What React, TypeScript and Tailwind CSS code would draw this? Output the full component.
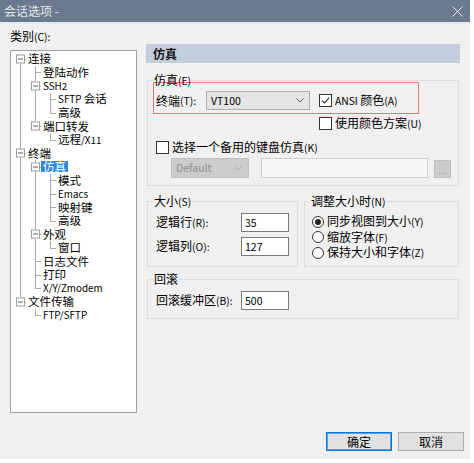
import React from "react";

type Node = { label: string; level: number; exp?: boolean; sel?: boolean };

const TREE: Node[] = [
  { label: "连接", level: 0, exp: true },
  { label: "登陆动作", level: 1 },
  { label: "SSH2", level: 1, exp: true },
  { label: "SFTP 会话", level: 2 },
  { label: "高级", level: 2 },
  { label: "端口转发", level: 1, exp: true },
  { label: "远程/X11", level: 2 },
  { label: "终端", level: 0, exp: true },
  { label: "仿真", level: 1, exp: true, sel: true },
  { label: "模式", level: 2 },
  { label: "Emacs", level: 2 },
  { label: "映射键", level: 2 },
  { label: "高级", level: 2 },
  { label: "外观", level: 1, exp: true },
  { label: "窗口", level: 2 },
  { label: "日志文件", level: 1 },
  { label: "打印", level: 1 },
  { label: "X/Y/Zmodem", level: 1 },
  { label: "文件传输", level: 0, exp: true },
  { label: "FTP/SFTP", level: 1 },
];

const INDENT = 15;
const LINE0 = 9;
const CJK = /[\u3000-\u9fff\uff00-\uffef]/;

// Latin runs render a little smaller next to CJK, like the Windows UI font does
function Mixed({ text }: { text: string }) {
  const parts = text.split(/([\u3000-\u9fff\uff00-\uffef]+)/).filter((p) => p !== "");
  return (
    <>
      {parts.map((p, i) =>
        CJK.test(p) ? (
          <span key={i} className="inline-block whitespace-pre">
            {p}
          </span>
        ) : (
          <span key={i} className="inline-block whitespace-pre text-[0.86em]">
            {p}
          </span>
        )
      )}
    </>
  );
}

// does the branch at level k keep going below row i?
function continues(i: number, k: number) {
  for (let j = i + 1; j < TREE.length; j++) {
    if (TREE[j].level < k) return false;
    if (TREE[j].level === k) return true;
  }
  return false;
}

function TreeRow({ node, i }: { node: Node; i: number }) {
  const x = LINE0 + node.level * INDENT;
  const guides = [];
  for (let k = 0; k < node.level; k++) {
    if (continues(i, k))
      guides.push(
        <span
          key={k}
          className="absolute top-0 bottom-0 w-px bg-[#a9a9a9]"
          style={{ left: LINE0 + k * INDENT }}
        />
      );
  }
  return (
    <div className="relative flex h-[13.5px] items-center">
      {guides}
      {i > 0 && (
        <span className="absolute top-0 h-1/2 w-px bg-[#a9a9a9]" style={{ left: x }} />
      )}
      {continues(i, node.level) && (
        <span className="absolute bottom-0 h-1/2 w-px bg-[#a9a9a9]" style={{ left: x }} />
      )}
      <span className="absolute top-1/2 h-px w-[6px] bg-[#a9a9a9]" style={{ left: x }} />
      {node.exp && (
        <span
          className="absolute top-1/2 flex h-[9px] w-[9px] -translate-y-1/2 items-center justify-center border border-[#9c9c9c] bg-white"
          style={{ left: x - 4 }}
        >
          <span className="h-px w-[5px] bg-[#5a5a5a]" />
        </span>
      )}
      <span
        className={
          "px-[2px] text-[11.5px] leading-[11px] " +
          (node.sel ? "bg-[#2f87dc] text-white" : "text-black")
        }
        style={{ marginLeft: x + 6 }}
      >
        <Mixed text={node.label} />
      </span>
    </div>
  );
}

function Check({ checked }: { checked?: boolean }) {
  return (
    <span className="flex h-[13px] w-[13px] shrink-0 items-center justify-center border border-[#333333] bg-white">
      {checked && (
        <svg width="9" height="9" viewBox="0 0 9 9">
          <path d="M1 4.6 L3.4 7 L8.2 1.6" stroke="#222" strokeWidth="1.1" fill="none" />
        </svg>
      )}
    </span>
  );
}

function Radio({ on }: { on?: boolean }) {
  return (
    <span className="flex h-[12px] w-[12px] shrink-0 items-center justify-center rounded-full border border-[#333333] bg-white">
      {on && <span className="h-[6px] w-[6px] rounded-full bg-[#222222]" />}
    </span>
  );
}

function Chevron({ color }: { color: string }) {
  return (
    <svg width="8" height="5" viewBox="0 0 8 5">
      <path d="M0.5 0.5 L4 4 L7.5 0.5" stroke={color} strokeWidth="1" fill="none" />
    </svg>
  );
}

function TextBox({ value }: { value: string }) {
  return (
    <div className="flex h-[19px] w-[48px] items-center border border-[#7a7a7a] bg-white pl-[3px] text-[10.5px] leading-[14px]">
      {value}
    </div>
  );
}

function Legend({ text }: { text: string }) {
  return (
    <legend className="ml-[5px] px-[1px] text-[12px] leading-[14px]">
      <Mixed text={text} />
    </legend>
  );
}

export default function App() {
  return (
    <div className="h-[463px] w-[474px] bg-white font-['Noto_Sans_CJK_SC',sans-serif] text-black">
      <div className="flex h-[459px] w-[470px] flex-col bg-[#f0f0f0]">
        {/* title bar */}
        <div className="flex h-[24px] shrink-0 items-center justify-between border-b-2 border-[#e6e9ed] bg-[#6b7a8f] pl-[4px] pr-[7px]">
          <span className="text-[12px] leading-[14px] text-[#e3e7ec]">会话选项 -</span>
          <svg width="11" height="11" viewBox="0 0 11 11">
            <path d="M0.5 0.5 L10.5 10.5 M10.5 0.5 L0.5 10.5" stroke="#e8ebef" strokeWidth="1" />
          </svg>
        </div>

        <div className="flex flex-1 flex-col">
          <div className="flex">
            {/* category tree */}
            <div className="ml-[10px] flex w-[127px] flex-col">
              <div className="mt-[5px] h-[14px] text-[12px] leading-[14px]">
                <Mixed text="类别(C):" />
              </div>
              <div className="mt-[7px] h-[363px] border border-[#a0a0a0] bg-white pt-[1px]">
                {TREE.map((n, i) => (
                  <TreeRow key={i} node={n} i={i} />
                ))}
              </div>
            </div>

            {/* emulation page */}
            <div className="ml-[9px] flex w-[314px] flex-col pt-[20px] text-[12px] leading-[14px]">
              <div className="flex h-[19px] items-center bg-[#c2cedb] pl-[7px] font-bold text-[#1a1a1a]">
                仿真
              </div>

              <fieldset className="mx-[1px] mt-[10px] border border-[#dcdcdc] pb-[7px]">
                <Legend text="仿真(E)" />
                <div className="-mt-[6px] ml-[5px] flex h-[32px] w-[266px] items-start border border-[#e0777b] pl-[2px] pt-[8px]">
                  <div className="flex h-[19px] w-[50px] items-center">
                    <Mixed text="终端(T):" />
                  </div>
                  <div className="flex h-[19px] w-[104px] items-center justify-between border border-[#adadad] bg-[#e5e5e5] pl-[4px] pr-[5px]">
                    <span className="text-[10.5px]">VT100</span>
                    <Chevron color="#606060" />
                  </div>
                  <div className="ml-[9px] flex h-[19px] items-center gap-[3px]">
                    <Check checked />
                    <span>
                      <Mixed text="ANSI 颜色(A)" />
                    </span>
                  </div>
                </div>
                <div className="mt-[3px] flex h-[13px] items-center gap-[3px] pl-[171px]">
                  <Check />
                  <span>
                    <Mixed text="使用颜色方案(U)" />
                  </span>
                </div>
                <div className="mt-[11px] flex h-[13px] items-center gap-[3px] pl-[8px]">
                  <Check />
                  <span>
                    <Mixed text="选择一个备用的键盘仿真(K)" />
                  </span>
                </div>
                <div className="mt-[4px] flex h-[20px] pl-[23px]">
                  <div className="flex w-[78px] items-center justify-between border border-[#bfbfbf] bg-[#cccccc] pl-[4px] pr-[6px] text-[10.5px] text-[#8c8c8c]">
                    <span>Default</span>
                    <Chevron color="#a8a8a8" />
                  </div>
                  <div className="ml-[12px] w-[167px] border border-[#cfcfcf] bg-[#f7f7f7]" />
                  <div className="ml-[6px] mt-[2px] flex w-[17px] items-end justify-center border border-[#bfbfbf] bg-[#cccccc] pb-[2px] text-[10px] leading-[10px] text-[#8c8c8c]">
                    ...
                  </div>
                </div>
              </fieldset>

              <div className="mx-[1px] mt-[8px] flex gap-[6px]">
                <fieldset className="w-[151px] border border-[#dcdcdc] pb-[10px]">
                  <Legend text="大小(S)" />
                  <div className="mt-[4px] flex items-center pl-[8px]">
                    <span className="w-[85px]">
                      <Mixed text="逻辑行(R):" />
                    </span>
                    <TextBox value="35" />
                  </div>
                  <div className="mt-[5px] flex items-center pl-[8px]">
                    <span className="w-[85px]">
                      <Mixed text="逻辑列(O):" />
                    </span>
                    <TextBox value="127" />
                  </div>
                </fieldset>
                <fieldset className="flex-1 border border-[#dcdcdc]">
                  <Legend text="调整大小时(N)" />
                  <div className="mt-[5px] flex flex-col pl-[7px]">
                    {[
                      ["同步视图到大小(Y)", true],
                      ["缩放字体(F)", false],
                      ["保持大小和字体(Z)", false],
                    ].map(([t, on]) => (
                      <div key={t as string} className="flex h-[15.5px] items-center gap-[3px]">
                        <Radio on={on as boolean} />
                        <span>
                          <Mixed text={t as string} />
                        </span>
                      </div>
                    ))}
                  </div>
                </fieldset>
              </div>

              <fieldset className="mx-[1px] mt-[5px] border border-[#dcdcdc] pb-[8px]">
                <Legend text="回滚" />
                <div className="mt-[5px] flex items-center pl-[8px]">
                  <span className="w-[85px]">
                    <Mixed text="回滚缓冲区(B):" />
                  </span>
                  <TextBox value="500" />
                </div>
              </fieldset>
            </div>
          </div>

          {/* buttons */}
          <div className="mt-auto flex justify-end gap-[6px] pb-[8px] pr-[6px]">
            <button className="h-[19px] w-[66px] border border-[#0078d7] bg-[#e1e1e1] text-[12px] leading-[14px] shadow-[inset_0_0_0_1px_#5ea0e0]">
              确定
            </button>
            <button className="h-[19px] w-[66px] border border-[#adadad] bg-[#e1e1e1] text-[12px] leading-[14px]">
              取消
            </button>
          </div>
        </div>
      </div>
    </div>
  );
}
